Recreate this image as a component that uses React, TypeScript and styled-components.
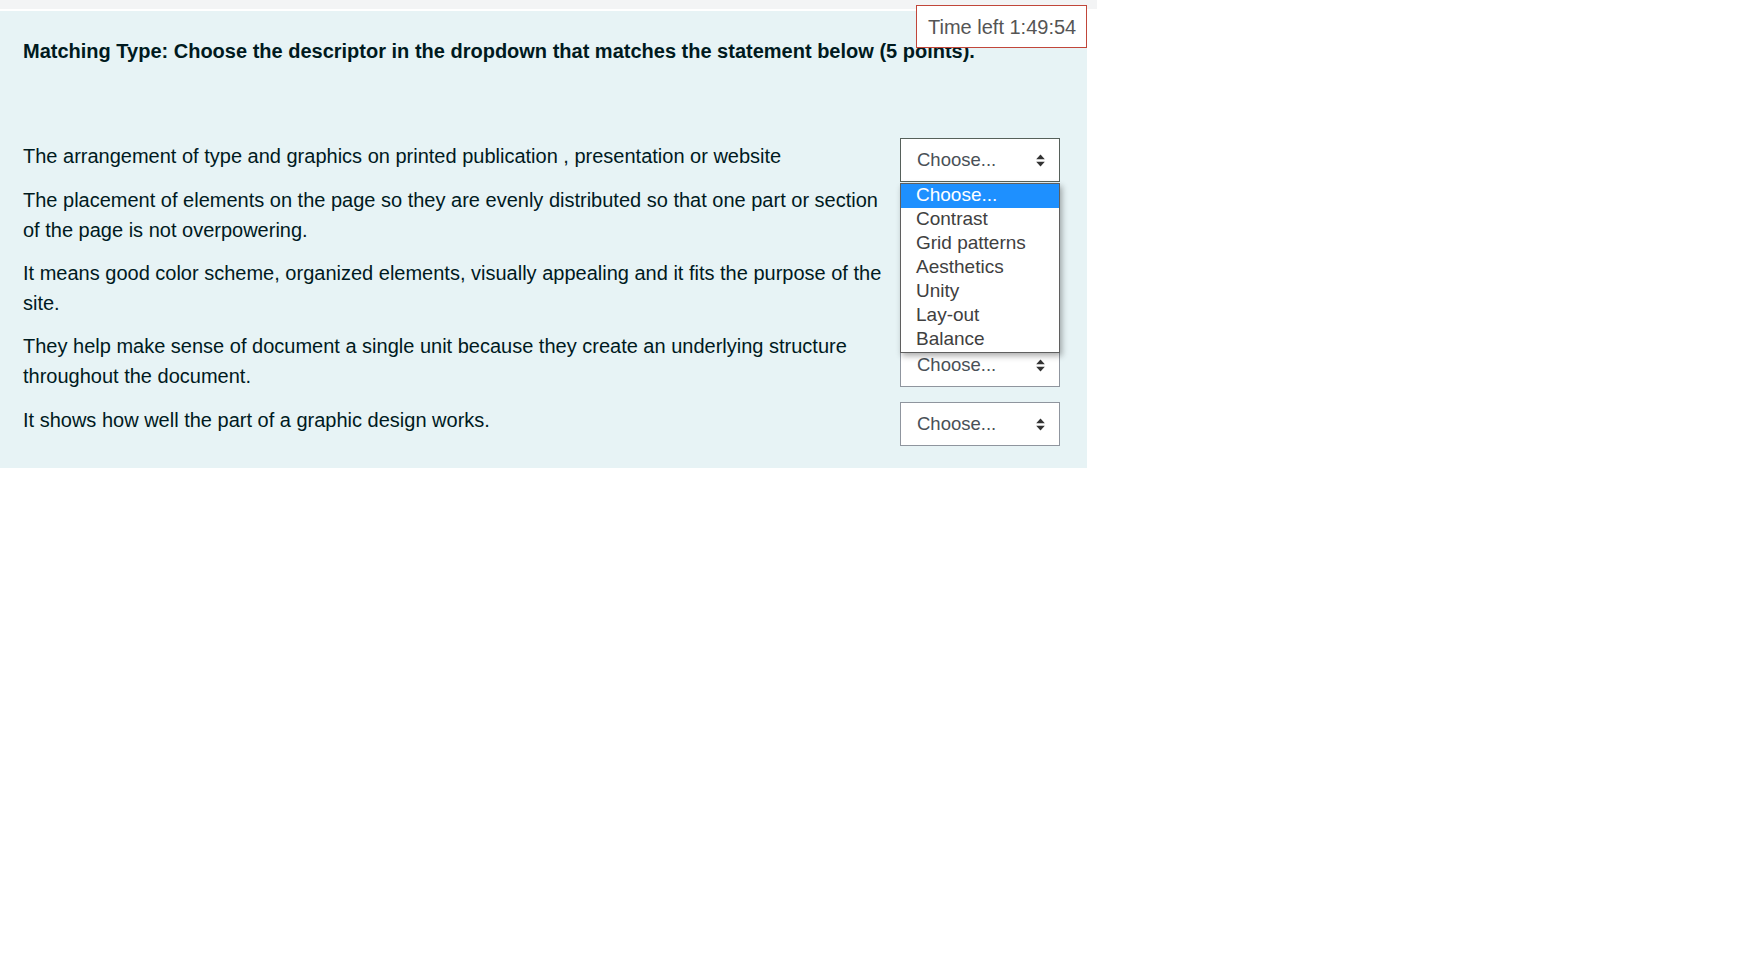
import React from 'react';
import styled, { createGlobalStyle } from 'styled-components';

const GlobalStyle = createGlobalStyle`
  html, body {
    margin: 0;
    padding: 0;
    background: #ffffff;
  }

  body {
    font-family: "Liberation Sans", Arial, sans-serif;
    color: #001a1e;
  }
`;

const Page = styled.div`
  position: relative;
  width: 1097px;
`;

const TopStrip = styled.div`
  height: 9px;
  margin-bottom: 2px;
  background: #f3f4f5;
`;

const Formulation = styled.div`
  width: 1087px;
  box-sizing: border-box;
  padding: 25px 0 22px 23px;
  background: #e7f3f5;
`;

const QuestionText = styled.p`
  margin: 0 0 72px;
  font-size: 20px;
  line-height: 30px;
  font-weight: 700;
  color: #001a1e;
  white-space: nowrap;
`;

const AnswerTable = styled.div`
  display: flex;
  flex-direction: column;
  gap: 1px;
`;

const AnswerRow = styled.div`
  display: grid;
  grid-template-columns: 872px 160px;
  column-gap: 5px;
  align-items: center;
`;

const StatementText = styled.div`
  padding: 2px 0 10px;
  font-size: 20px;
  line-height: 30px;
  color: #001a1e;
`;

const SelectBox = styled.div<{ $focused?: boolean }>`
  position: relative;
  height: 44px;
  box-sizing: border-box;
  display: flex;
  align-items: center;
  justify-content: space-between;
  padding: 0 14px 0 16px;
  background: #ffffff;
  border: 1px solid ${(p) => (p.$focused ? '#56605a' : '#8f959e')};
  color: #495057;
  font-size: 18.5px;
`;

const SortIcon = styled.svg`
  width: 9px;
  height: 13px;
  display: block;
`;

const OptionList = styled.ul`
  position: absolute;
  top: 44px;
  left: -1px;
  right: -1px;
  z-index: 5;
  margin: 0;
  padding: 0;
  list-style: none;
  background: #ffffff;
  border: 1px solid #5f5f5f;
  box-shadow: 2px 3px 6px rgba(0, 0, 0, 0.32);
`;

const OptionItem = styled.li<{ $active?: boolean }>`
  height: 24px;
  box-sizing: border-box;
  padding: 0 0 2px 15px;
  font-size: 19px;
  line-height: 22px;
  color: ${(p) => (p.$active ? '#ffffff' : '#404040')};
  background: ${(p) => (p.$active ? '#1e90ff' : 'transparent')};
`;

const Timer = styled.div`
  position: absolute;
  top: 5px;
  left: 916px;
  width: 171px;
  height: 43px;
  box-sizing: border-box;
  padding: 0 11px;
  background: #ffffff;
  border: 1px solid #c1463a;
  color: #555555;
  font-size: 20px;
  line-height: 42px;
  white-space: nowrap;
  z-index: 10;
`;

const choices = ['Choose...', 'Contrast', 'Grid patterns', 'Aesthetics', 'Unity', 'Lay-out', 'Balance'];

const statements = [
  'The arrangement of type and graphics on printed publication , presentation or website',
  'The placement of elements on the page so they are evenly distributed so that one part or section of the page is not overpowering.',
  'It means good color scheme, organized elements, visually appealing and it fits the purpose of the site.',
  'They help make sense of document a single unit because they create an underlying structure throughout the document.',
  'It shows how well the part of a graphic design works.',
];

function Sort() {
  return (
    <SortIcon viewBox="0 0 9 13">
      <path d="M4.5 0.5 L8.8 5.3 H0.2 Z" fill="#333" />
      <path d="M4.5 12.5 L8.8 7.7 H0.2 Z" fill="#333" />
    </SortIcon>
  );
}

function App() {
  return (
    <>
      <GlobalStyle />
      <Page>
        <TopStrip />
        <Formulation>
          <QuestionText>
            Matching Type: Choose the descriptor in the dropdown that matches the statement below (5 points).
          </QuestionText>
          <AnswerTable>
            {statements.map((text, i) => (
              <AnswerRow key={text}>
                <StatementText>{text}</StatementText>
                <SelectBox $focused={i === 0}>
                  <span>Choose...</span>
                  <Sort />
                  {i === 0 && (
                    <OptionList>
                      {choices.map((c, j) => (
                        <OptionItem key={c} $active={j === 0}>{c}</OptionItem>
                      ))}
                    </OptionList>
                  )}
                </SelectBox>
              </AnswerRow>
            ))}
          </AnswerTable>
        </Formulation>
        <Timer>Time left 1:49:54</Timer>
      </Page>
    </>
  );
}

export default App;
